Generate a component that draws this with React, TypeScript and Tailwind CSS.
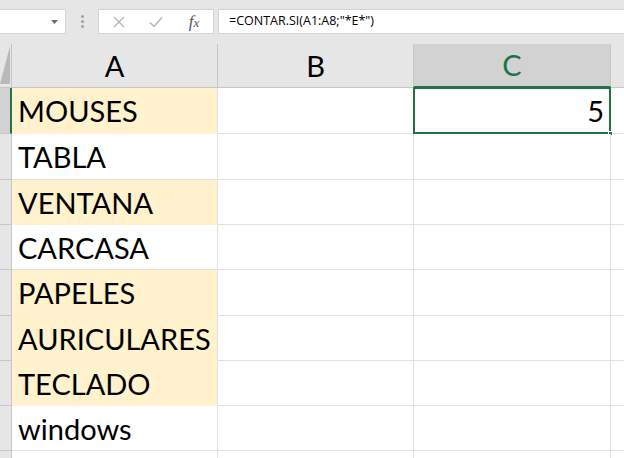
import React from "react";

const rows: { text: string; hl: boolean; h: string }[] = [
  { text: "MOUSES", hl: true, h: "h-[46px]" },
  { text: "TABLA", hl: false, h: "h-[46px]" },
  { text: "VENTANA", hl: true, h: "h-[45px]" },
  { text: "CARCASA", hl: false, h: "h-[45px]" },
  { text: "PAPELES", hl: true, h: "h-[46px]" },
  { text: "AURICULARES", hl: true, h: "h-[45px]" },
  { text: "TECLADO", hl: true, h: "h-[45px]" },
  { text: "windows", hl: false, h: "h-[45px]" },
  { text: "", hl: false, h: "h-[45px]" },
];

const cellFont = { fontFamily: "Lato, 'Open Sans', sans-serif" };

export default function App() {
  return (
    <div className="w-[624px] h-[458px] overflow-hidden bg-[#e6e6e6] select-none">
      {/* formula bar */}
      <div className="h-[44px] flex items-start pt-[9px] bg-[#e6e6e6]">
        <div className="w-[66px] h-[25px] bg-white border border-[#d4d4d4] border-l-0 flex items-center justify-end pr-[7px]">
          <svg width="7" height="4" viewBox="0 0 7 4">
            <path d="M0 0h7L3.5 4z" fill="#6b6b6b" />
          </svg>
        </div>
        <div className="w-[32px] h-[25px] flex items-center justify-center">
          <div className="flex flex-col gap-[2px]">
            <span className="w-[3px] h-[3px] rounded-full bg-[#a0a0a0]" />
            <span className="w-[3px] h-[3px] rounded-full bg-[#a0a0a0]" />
            <span className="w-[3px] h-[3px] rounded-full bg-[#a0a0a0]" />
          </div>
        </div>
        <div className="w-[116px] h-[25px] bg-white border border-[#d4d4d4] flex items-center">
          <div className="w-[38px] flex justify-center pl-[1px]">
            <svg width="12" height="12" viewBox="0 0 12 12">
              <path d="M1 1l10 10M11 1L1 11" stroke="#b5b5b5" strokeWidth="1.3" />
            </svg>
          </div>
          <div className="w-[38px] flex justify-center">
            <svg width="14" height="12" viewBox="0 0 14 12">
              <path d="M1 6.5l4 4L13 1.5" stroke="#b5b5b5" strokeWidth="1.5" fill="none" />
            </svg>
          </div>
          <div className="w-[38px] flex justify-center">
            <span
              className="text-[17px] italic text-[#555] leading-none"
              style={{ fontFamily: "'Liberation Serif', serif" }}
            >
              f<span className="text-[13px]">x</span>
            </span>
          </div>
        </div>
        <div className="w-[4px]" />
        <div
          className="flex-1 h-[25px] bg-white border border-[#d4d4d4] border-r-0 flex items-center pl-[10px] text-[12.5px] text-black"
          style={{ fontFamily: "'Open Sans', 'Noto Sans', sans-serif" }}
        >
          =CONTAR.SI(A1:A8;"*E*")
        </div>
      </div>

      {/* column headers */}
      <div className="h-[44px] flex bg-[#e6e6e6] border-b border-[#c6c6c6]">
        <div className="w-[12px] border-r border-[#c6c6c6] flex items-end pb-[3px]">
          <svg width="10" height="38" viewBox="0 0 10 38">
            <path d="M0 38L10 0V38z" fill="#b9b9b9" />
          </svg>
        </div>
        <div
          className="w-[206px] border-r border-[#c6c6c6] flex items-center justify-center text-[29px] text-black"
          style={cellFont}
        >
          A
        </div>
        <div
          className="w-[196px] border-r border-[#c6c6c6] flex items-center justify-center text-[29px] text-black"
          style={cellFont}
        >
          B
        </div>
        <div
          className="w-[197px] bg-[#d2d2d2] border-r border-[#c6c6c6] border-b-2 border-b-[#217346] -mb-[1px] flex items-center justify-center text-[29px] text-[#217346]"
          style={cellFont}
        >
          C
        </div>
        <div className="flex-1" />
      </div>

      {/* grid */}
      <div className="flex flex-col">
        {rows.map((r, i) => (
          <div key={i} className={`${r.h} flex`}>
            <div
              className={`w-[12px] border-b border-[#c6c6c6] ${
                i === 0
                  ? "bg-[#d2d2d2] border-r-2 border-r-[#217346]"
                  : "bg-[#e6e6e6] border-r border-r-[#c6c6c6]"
              }`}
            />
            <div
              className={`w-[206px] border-r border-b border-[#e1e1e1] flex items-center pl-[6px] text-[29px] text-black leading-none ${
                r.hl ? "bg-[#fff2cc] border-b-[#fff2cc]" : "bg-white"
              }`}
              style={cellFont}
            >
              {r.text}
            </div>
            <div className="w-[196px] bg-white border-r border-b border-[#e1e1e1]" />
            <div
              className="w-[197px] bg-white border-r border-b border-[#e1e1e1] relative flex items-center justify-end pr-[6px] text-[29px] text-black leading-none"
              style={cellFont}
            >
              {i === 0 && (
                <>
                  <div className="absolute -left-[1px] -top-[1px] -right-[1px] -bottom-[1px] border-2 border-[#217346]" />
                  <div className="absolute -right-[3px] -bottom-[3px] w-[5px] h-[5px] bg-[#217346] border border-white" />
                  5
                </>
              )}
            </div>
            <div className="flex-1 bg-white border-b border-[#e1e1e1]" />
          </div>
        ))}
      </div>
    </div>
  );
}
